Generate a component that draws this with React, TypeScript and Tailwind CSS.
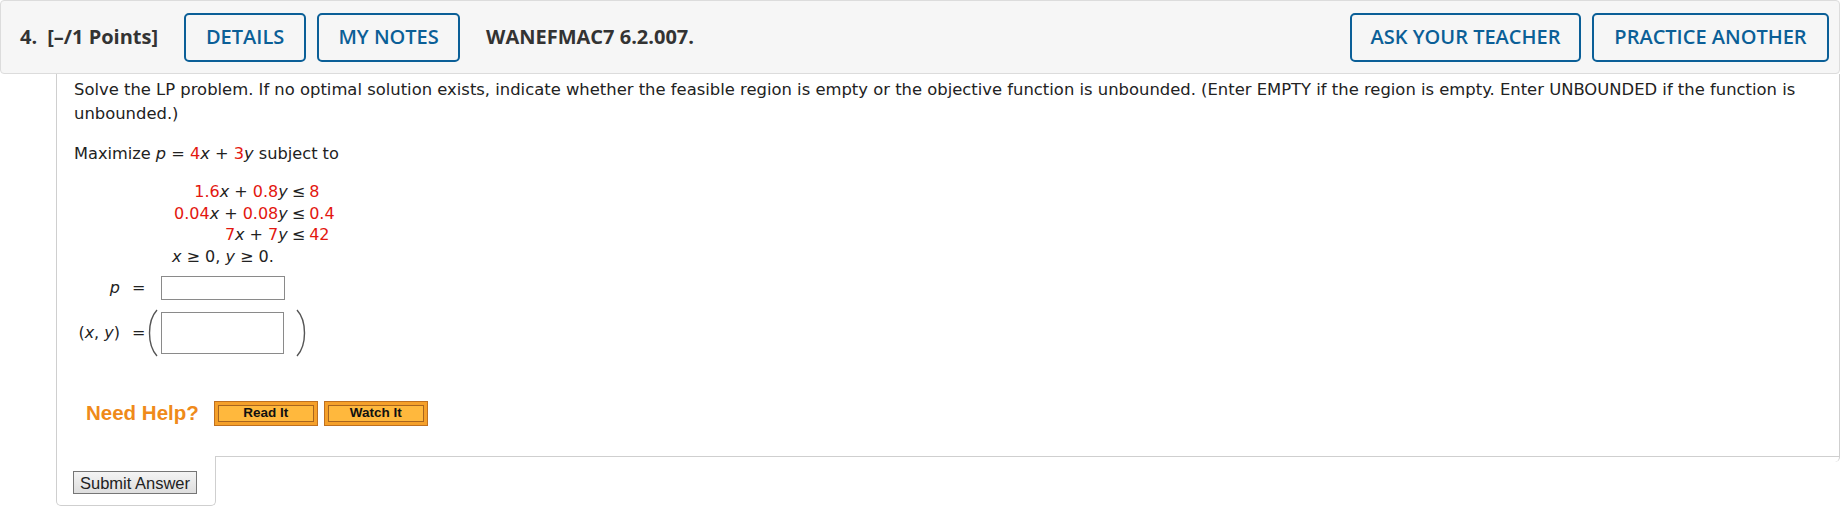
import React from "react"

const body = { fontFamily: '"DejaVu Sans", Verdana, sans-serif' }
const head = { fontFamily: '"Open Sans", "Noto Sans", sans-serif' }
const arial = { fontFamily: '"Liberation Sans", Arial, sans-serif' }

function Red({ children }: { children: React.ReactNode }) {
  return <span className="text-[#e3170f]">{children}</span>
}

function V({ children }: { children: React.ReactNode }) {
  return <i>{children}</i>
}

function HeadButton({ label, w }: { label: string; w: string }) {
  return (
    <button
      className={`${w} h-[49px] rounded-[5px] border-2 border-[#0b5f97] text-[#0b5f97] text-[20px] font-semibold flex items-center justify-center bg-transparent`}
    >
      {label}
    </button>
  )
}

function Paren({ flip }: { flip?: boolean }) {
  return (
    <svg width="11" height="48" viewBox="0 0 11 48" className={flip ? "-scale-x-100" : ""}>
      <path d="M10 1 C0 12 0 36 10 47" fill="none" stroke="#555" strokeWidth="1.4" />
    </svg>
  )
}

function HelpButton({ label }: { label: string }) {
  return (
    <div className="w-[104px] h-[25px] border border-[#c0701f] bg-[#f5a02a] p-[3px]">
      <div
        className="h-full border border-[#a8651f] bg-[#ffb83d] flex items-center justify-center text-[13.5px] font-bold text-[#111]"
        style={arial}
      >
        {label}
      </div>
    </div>
  )
}

export default function App() {
  return (
    <div className="w-[1841px] h-[506px] bg-white overflow-hidden text-[#222]">
      {/* question header */}
      <div
        className="w-[1840px] h-[74px] flex items-center bg-[#f6f6f6] border border-[#dcdcdc] rounded-[4px] pl-[19px] pr-[10px]"
        style={head}
      >
        <span className="text-[20px] font-bold text-[#333]">4.</span>
        <span className="ml-[10px] text-[20px] font-bold text-[#333]">[–/1 Points]</span>
        <div className="ml-[26px] flex gap-[11px]">
          <HeadButton label="DETAILS" w="w-[122px]" />
          <HeadButton label="MY NOTES" w="w-[143px]" />
        </div>
        <span className="ml-[26px] text-[20px] font-bold text-[#333]">WANEFMAC7 6.2.007.</span>
        <div className="ml-auto flex gap-[11px]">
          <HeadButton label="ASK YOUR TEACHER" w="w-[231px]" />
          <HeadButton label="PRACTICE ANOTHER" w="w-[237px]" />
        </div>
      </div>

      <div className="ml-[56px] w-[1784px]" style={body}>
        {/* question body */}
        <div className="h-[382px] border-x border-[#cfcfcf] pl-[17px] pt-[4px] text-[16px] text-[#222]">
          <p className="leading-[24px] pr-[30px] text-[16.4px]">
            Solve the LP problem. If no optimal solution exists, indicate whether the feasible region is empty or the
            objective function is unbounded. (Enter EMPTY if the region is empty. Enter UNBOUNDED if the function is
            unbounded.)
          </p>
          <p className="mt-[16px] leading-[24px] text-[16.2px]">
            Maximize <V>p</V> = <Red>4</Red>
            <V>x</V> + <Red>3</Red>
            <V>y</V> subject to
          </p>

          <div className="mt-[15px] ml-[100px] w-fit grid grid-cols-[auto_auto_auto] leading-[21.5px]">
            <span className="text-right">
              <Red>1.6</Red>
              <V>x</V> + <Red>0.8</Red>
              <V>y</V>
            </span>
            <span className="px-[4px]">≤</span>
            <span>
              <Red>8</Red>
            </span>
            <span className="text-right">
              <Red>0.04</Red>
              <V>x</V> + <Red>0.08</Red>
              <V>y</V>
            </span>
            <span className="px-[4px]">≤</span>
            <span>
              <Red>0.4</Red>
            </span>
            <span className="text-right">
              <Red>7</Red>
              <V>x</V> + <Red>7</Red>
              <V>y</V>
            </span>
            <span className="px-[4px]">≤</span>
            <span>
              <Red>42</Red>
            </span>
            <span className="col-span-3 -ml-[2px]">
              <V>x</V> ≥ 0, <V>y</V> ≥ 0.
            </span>
          </div>

          {/* answers */}
          <div className="mt-[9px] flex items-center h-[24px]">
            <span className="w-[46px] text-right">
              <V>p</V>
            </span>
            <span className="ml-[12px] w-[29px]">=</span>
            <div className="w-[124px] h-[24px] border border-[#8a8a8a] bg-white" />
          </div>
          <div className="mt-[9px] flex items-center h-[48px]">
            <span className="w-[46px] text-right whitespace-nowrap">
              (<V>x</V>, <V>y</V>)
            </span>
            <span className="ml-[12px] w-[15px]">=</span>
            <Paren />
            <div className="ml-[3px] w-[123px] h-[42px] border border-[#8a8a8a] bg-white" />
            <div className="ml-[12px]">
              <Paren flip />
            </div>
          </div>

          <div className="mt-[41px] flex items-center">
            <span className="ml-[12px] text-[20.5px] font-bold text-[#ef8a1a]" style={arial}>
              Need Help?
            </span>
            <div className="ml-[15px] flex gap-[6px]">
              <HelpButton label="Read It" />
              <HelpButton label="Watch It" />
            </div>
          </div>
        </div>

        {/* submit tab */}
        <div className="flex">
          <div className="w-[160px] h-[50px] border-x border-b border-[#cfcfcf] rounded-b-[5px] pl-[16px] pt-[15px]">
            <button
              className="h-[23px] px-[6px] border border-[#767676] bg-gradient-to-b from-[#f4f4f4] to-[#dedede] text-[16.5px] text-[#222] leading-[20px]"
              style={arial}
            >
              Submit Answer
            </button>
          </div>
          <div className="flex-1 h-[6px] border-t border-r border-[#cfcfcf] rounded-br-[5px] -ml-[1px]" />
        </div>
      </div>
    </div>
  )
}
